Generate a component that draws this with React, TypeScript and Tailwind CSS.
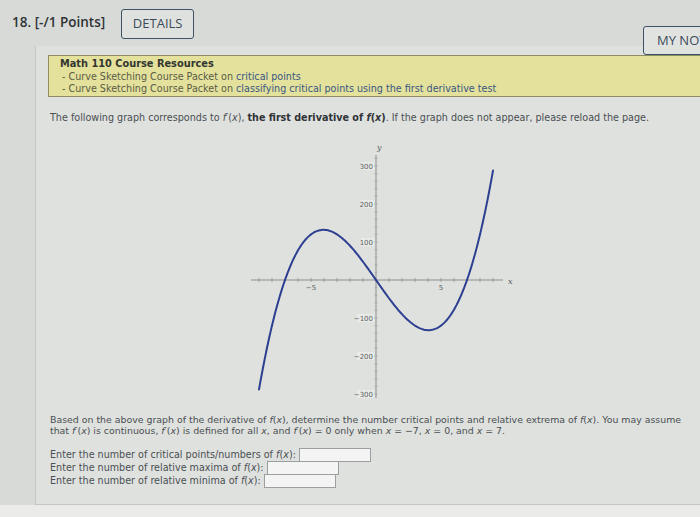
import React from 'react';

// graph of f'(x) = x^3 - 49x, drawn in svg units
const OX = 136;
const OY = 140;
const SX = 13;
const SY = 0.38;

const curvePath = (() => {
  const pts: string[] = [];
  for (let i = 0; i <= 180; i++) {
    const t = -9 + i * 0.1;
    const v = t * t * t - 49 * t;
    pts.push(`${i === 0 ? 'M' : 'L'}${(OX + t * SX).toFixed(2)},${(OY - v * SY).toFixed(2)}`);
  }
  return pts.join(' ');
})();

const xTicks = Array.from({ length: 19 }, (_, i) => i - 9);
const yTicks = Array.from({ length: 33 }, (_, i) => -320 + i * 20);
const yLabels = [300, 200, 100, -100, -200, -300];

const DerivativeGraph: React.FC = () => (
  <svg width={280} height={260} viewBox="0 0 280 260" className="block">
    {/* axes */}
    <line x1={11} y1={OY} x2={263} y2={OY} stroke="#8c8f8f" strokeWidth={1} />
    <line x1={OX} y1={15} x2={OX} y2={258} stroke="#8c8f8f" strokeWidth={1} />
    {xTicks.map((t) => (
      <line key={t} x1={OX + t * SX} y1={OY - 2} x2={OX + t * SX} y2={OY + 2} stroke="#8c8f8f" strokeWidth={0.8} />
    ))}
    {yTicks.map((v) => (
      <line key={v} x1={OX - 1.5} y1={OY - v * SY} x2={OX + 1.5} y2={OY - v * SY} stroke="#9a9d9d" strokeWidth={0.6} />
    ))}
    {yLabels.map((v) => (
      <g key={v}>
        <rect x={OX - (v < 0 ? 19 : 15)} y={OY - v * SY - 4} width={v < 0 ? 17 : 13} height={8} fill="#e9ebe9" />
        <text
          x={OX - 3}
          y={OY - v * SY + 2.5}
          textAnchor="end"
          fontSize={7}
          fill="#5a5e60"
          fontFamily="'DejaVu Sans', sans-serif"
        >
          {v < 0 ? `\u2212${-v}` : v}
        </text>
      </g>
    ))}
    <text x={OX - 5 * SX} y={OY + 10} textAnchor="middle" fontSize={7} fill="#5a5e60" fontFamily="'DejaVu Sans', sans-serif">
      {'\u22125'}
    </text>
    <text x={OX + 5 * SX} y={OY + 10} textAnchor="middle" fontSize={7} fill="#5a5e60" fontFamily="'DejaVu Sans', sans-serif">
      5
    </text>
    <text x={268} y={OY + 4} fontSize={8} fontStyle="italic" fill="#5a5e60" fontFamily="'DejaVu Serif', serif">
      x
    </text>
    <text x={OX + 1} y={10} fontSize={8} fontStyle="italic" fill="#5a5e60" fontFamily="'DejaVu Serif', serif">
      y
    </text>
    <path d={curvePath} fill="none" stroke="#2c3f90" strokeWidth={2} strokeLinecap="round" />
  </svg>
);

const Fx: React.FC<{ prime?: boolean }> = ({ prime }) => (
  <span>
    <i>f</i>
    {prime ? '\u2032' : ''}(<i>x</i>)
  </span>
);

const AnswerRow: React.FC<{ label: React.ReactNode }> = ({ label }) => (
  <div className="flex items-center gap-[3px] h-[13px]">
    <span>{label}</span>
    <input type="text" className="w-[72px] h-[14px] bg-[#f3f4f3] border border-[#9c9f9f] outline-none" />
  </div>
);

export default function App() {
  return (
    <div className="w-[700px] h-[517px] overflow-hidden bg-[#d8dad8]">
      <div className="w-[745px]">
        <header className="flex items-start h-[46px] pl-[12px] font-['Open_Sans',sans-serif] text-[#2e3336]">
          <span className="pt-[12px] leading-[20px] text-[13.5px] font-semibold whitespace-nowrap">18. [-/1 Points]</span>
          <button className="ml-[16px] mt-[9px] h-[30px] w-[73px] border-[1.5px] border-[#3e5266] rounded-[3px] text-[13px] text-[#3b4b5a] bg-[#dfe1df]">
            DETAILS
          </button>
          <button className="ml-auto mt-[26px] h-[29px] w-[102px] border-[1.5px] border-[#3e5266] rounded-[3px] text-[13px] text-[#3b4b5a] bg-[#e1e3e1] text-left pl-[13px] whitespace-nowrap">
            MY NOTES
          </button>
        </header>

        <main className="ml-[35px] h-[459px] border-l border-b border-[#c3c6c4] bg-[#dfe1df] pl-[12px] font-['DejaVu_Sans',sans-serif] text-[9.6px] text-[#4a4f52]">
          <div className="pt-[9px]">
            <div className="border border-[#8f8d62] bg-[#e3e19b] pl-[11px] pt-[2px] leading-[12.5px]">
              <div className="font-bold text-[9.8px] text-[#33362f]">Math 110 Course Resources</div>
              <div className="pl-[2px] text-[#5b5c48]">
                - Curve Sketching Course Packet on <span className="text-[#3a5684]">critical points</span>
              </div>
              <div className="pl-[2px] text-[#5b5c48]">
                - Curve Sketching Course Packet on{' '}
                <span className="text-[#3a5684]">classifying critical points using the first derivative test</span>
              </div>
            </div>
          </div>

          <p className="mt-[15px] pl-[2px] leading-[11px] whitespace-nowrap">
            The following graph corresponds to <Fx prime />,{' '}
            <b className="text-[#2f3336]">
              the first derivative of <Fx />
            </b>
            . If the graph does not appear, please reload the page.
          </p>

          <div className="mt-[17px] ml-[192px]">
            <DerivativeGraph />
          </div>

          <p className="mt-[14px] pl-[2px] leading-[11px] whitespace-nowrap text-[9.4px]">
            Based on the above graph of the derivative of <Fx />, determine the number critical points and relative
            extrema of <Fx />. You may assume
            <br />
            that <Fx prime /> is continuous, <Fx prime /> is defined for all <i>x</i>, and <Fx prime /> = 0 only when{' '}
            <i>x</i> = &minus;7, <i>x</i> = 0, and <i>x</i> = 7.
          </p>

          <div className="mt-[13px] pl-[2px] flex flex-col">
            <AnswerRow label={<>Enter the number of critical points/numbers of <Fx />:</>} />
            <AnswerRow label={<>Enter the number of relative maxima of <Fx />:</>} />
            <AnswerRow label={<>Enter the number of relative minima of <Fx />:</>} />
          </div>
        </main>
        <div className="h-[12px] bg-[#ebecea]" />
      </div>
    </div>
  );
}
